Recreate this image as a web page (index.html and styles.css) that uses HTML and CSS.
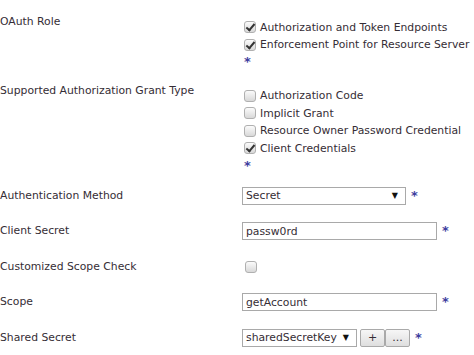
FILE: index.html
```html
<!DOCTYPE html>
<html lang="en">
<head>
    <meta charset="UTF-8">
    <link rel="stylesheet" href="styles.css">
    <title>OAuth Settings</title>
</head>
<body>
    <form class="settings">
        <div class="row multi first">
            <div class="label">OAuth Role</div>
            <div class="options">
                <div class="option"><span class="box checked"></span>Authorization and Token Endpoints</div>
                <div class="option"><span class="box checked"></span>Enforcement Point for Resource Server</div>
                <div class="option"><span class="req">*</span></div>
            </div>
        </div>
        <div class="row multi second">
            <div class="label">Supported Authorization Grant Type</div>
            <div class="options">
                <div class="option"><span class="box"></span>Authorization Code</div>
                <div class="option"><span class="box"></span>Implicit Grant</div>
                <div class="option"><span class="box"></span>Resource Owner Password Credential</div>
                <div class="option"><span class="box checked"></span>Client Credentials</div>
                <div class="option"><span class="req">*</span></div>
            </div>
        </div>
        <div class="row single">
            <div class="label">Authentication Method</div>
            <div class="field">
                <div class="select wide"><span>Secret</span><span class="arrow">&#9660;</span></div>
                <span class="req">*</span>
            </div>
        </div>
        <div class="row single">
            <div class="label">Client Secret</div>
            <div class="field">
                <div class="text">passw0rd</div>
                <span class="req">*</span>
            </div>
        </div>
        <div class="row single">
            <div class="label">Customized Scope Check</div>
            <div class="field">
                <span class="box"></span>
            </div>
        </div>
        <div class="row single">
            <div class="label">Scope</div>
            <div class="field">
                <div class="text">getAccount</div>
                <span class="req">*</span>
            </div>
        </div>
        <div class="row single">
            <div class="label">Shared Secret</div>
            <div class="field">
                <div class="select small"><span>sharedSecretKey</span><span class="arrow">&#9660;</span></div>
                <div class="btn">+</div>
                <div class="btn">...</div>
                <span class="req">*</span>
            </div>
        </div>
    </form>
</body>
</html>
```
FILE: styles.css
```css
*{
    margin: 0;
    padding: 0;
    box-sizing: border-box;
}
body{
    font-family: "DejaVu Sans", Verdana, sans-serif;
    font-size: 10.8px;
    color: #352d35;
    background-color: #ffffff;
}
.settings{
    display: flex;
    flex-direction: column;
    padding-top: 15px;
}
.row{
    display: grid;
    grid-template-columns: 242px 1fr;
}
.label{
    line-height: 14px;
    white-space: nowrap;
}
.multi .options{
    padding-top: 3.5px;
}
.second{
    margin-top: 13px;
}
.second .options{
    padding-top: 3px;
}
.option{
    display: flex;
    align-items: center;
    height: 17.5px;
    padding-left: 2px;
    white-space: nowrap;
}
.box{
    display: inline-block;
    position: relative;
    width: 12px;
    height: 12px;
    margin-right: 4px;
    border: 1px solid #b0b0b0;
    border-radius: 3px;
    background: linear-gradient(#fbfbfb, #d8d8d8);
}
.box.checked::after{
    content: "";
    position: absolute;
    left: 3px;
    top: 0px;
    width: 3px;
    height: 7px;
    border: solid #333;
    border-width: 0 2px 2px 0;
    transform: rotate(40deg);
}
.req{
    color: #3d3d9e;
    font-size: 13px;
    font-weight: bold;
    line-height: 12px;
}
.single{
    height: 35.5px;
    align-items: center;
}
.single:nth-child(3){
    margin-top: 3.5px;
}
.field{
    display: flex;
    align-items: center;
    gap: 5px;
}
.field > .box{
    margin-left: 3px;
}
.select,
.text{
    display: flex;
    align-items: center;
    justify-content: space-between;
    height: 18px;
    padding: 0 4px 0 3px;
    border: 1px solid #a9a9a9;
    background-color: #ffffff;
}
.select{
    padding-right: 7px;
}
.select.wide{
    width: 164px;
}
.select.small{
    width: 115px;
}
.text{
    width: 195px;
}
.arrow{
    font-size: 8px;
    color: #111;
}
.btn{
    display: flex;
    align-items: center;
    justify-content: center;
    width: 25px;
    height: 18px;
    border: 1px solid #a9a9a9;
    border-radius: 2px;
    background: linear-gradient(#f6f6f6, #dedede);
    font-size: 11px;
}
.select.small + .btn{
    margin-left: -2px;
}
.btn + .btn{
    margin-left: -5px;
}
```
